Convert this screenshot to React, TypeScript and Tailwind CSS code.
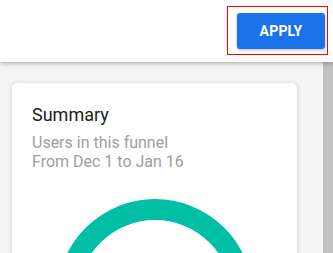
export default function App() {
  return (
    <div className="flex h-[253px] w-[333px] flex-col overflow-hidden bg-[#f5f5f5] font-['Roboto',sans-serif]">
      <header className="relative z-10 flex h-[62px] shrink-0 items-start justify-end bg-white pr-2 pt-[13px] shadow-[0_2px_4px_rgba(0,0,0,0.25)]">
        <div className="relative">
          <span className="pointer-events-none absolute -top-[7px] -left-[10px] -right-[3px] -bottom-[6px] border border-[#ff0000]" />
          <button className="h-[36px] w-[88px] rounded-[3px] bg-[#1a73e8] text-[14px] font-bold tracking-[0.2px] text-white shadow-[0_1px_3px_rgba(0,0,0,0.3)]">
            APPLY
          </button>
        </div>
      </header>
      <div className="flex min-h-0 flex-1">
        <main className="flex-1 pl-3 pr-[26px] pt-[21px]">
          <div className="flex h-[340px] flex-col rounded-[5px] bg-white p-5 shadow-[0_1px_5px_rgba(0,0,0,0.18)]">
            <h2 className="text-[18px] leading-[24px] text-[#212121]">Summary</h2>
            <p className="mt-[6px] text-[16px] leading-[19.2px] text-[#9e9e9e]">
              Users in this funnel
              <br />
              From Dec 1 to Jan 16
            </p>
            <svg className="mt-[28px] shrink-0 self-center" width="196" height="196" viewBox="0 0 196 196">
              <circle cx="98" cy="98" r="87.5" fill="none" stroke="#00bfa5" strokeWidth="21" />
            </svg>
          </div>
        </main>
        <div className="w-[10px] shrink-0 bg-[#c1c1c1]" />
      </div>
    </div>
  );
}
